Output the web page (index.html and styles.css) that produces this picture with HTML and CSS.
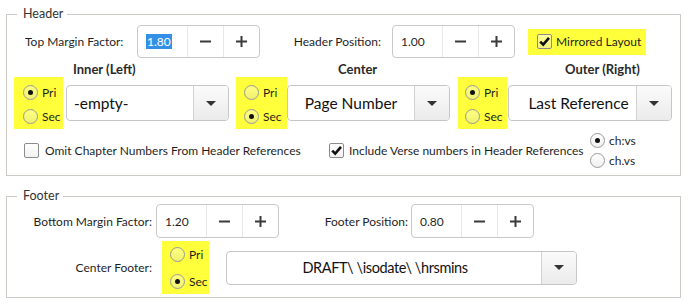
FILE: index.html
```html
<!DOCTYPE html>
<html lang="en">
<head>
  <meta charset="UTF-8" />
  <title>Header and Footer</title>
  <link rel="stylesheet" href="styles.css">
</head>
<body>
  <div class="page">
    <fieldset class="group">
      <legend>Header</legend>

      <div class="row row-spin">
        <label class="label-top">Top Margin Factor:</label>
        <div class="spin">
          <span class="spin-value"><span class="selected">1.80</span></span>
          <span class="spin-btn"><svg width="11" height="11" viewBox="0 0 11 11"><rect x="0" y="4.5" width="11" height="2" fill="#3a3a3a"/></svg></span>
          <span class="spin-btn"><svg width="11" height="11" viewBox="0 0 11 11"><rect x="0" y="4.5" width="11" height="2" fill="#3a3a3a"/><rect x="4.5" y="0" width="2" height="11" fill="#3a3a3a"/></svg></span>
        </div>
        <label class="label-pos">Header Position:</label>
        <div class="spin">
          <span class="spin-value">1.00</span>
          <span class="spin-btn"><svg width="11" height="11" viewBox="0 0 11 11"><rect x="0" y="4.5" width="11" height="2" fill="#3a3a3a"/></svg></span>
          <span class="spin-btn"><svg width="11" height="11" viewBox="0 0 11 11"><rect x="0" y="4.5" width="11" height="2" fill="#3a3a3a"/><rect x="4.5" y="0" width="2" height="11" fill="#3a3a3a"/></svg></span>
        </div>
        <div class="hl mirror">
          <span class="check"><svg width="13" height="13" viewBox="0 0 13 13"><path d="M2.2 6.6 L5.2 9.6 L11 2.8" fill="none" stroke="#111" stroke-width="2.6"/></svg></span>
          Mirrored Layout
        </div>
      </div>

      <div class="col-titles">
        <span>Inner (Left)</span>
        <span>Center</span>
        <span>Outer (Right)</span>
      </div>

      <div class="row row-slots">
        <div class="hl radios slot-1">
          <div class="radio-line"><span class="radio on"></span>Pri</div>
          <div class="radio-line"><span class="radio"></span>Sec</div>
        </div>
        <div class="combo combo-1">
          <span class="combo-text">-empty-</span>
          <span class="combo-btn"><svg width="10" height="5" viewBox="0 0 10 5"><polygon points="0,0 10,0 5,5" fill="#333"/></svg></span>
        </div>
        <div class="hl radios slot-2">
          <div class="radio-line"><span class="radio"></span>Pri</div>
          <div class="radio-line"><span class="radio on"></span>Sec</div>
        </div>
        <div class="combo combo-2">
          <span class="combo-text centered">Page Number</span>
          <span class="combo-btn"><svg width="10" height="5" viewBox="0 0 10 5"><polygon points="0,0 10,0 5,5" fill="#333"/></svg></span>
        </div>
        <div class="hl radios slot-3">
          <div class="radio-line"><span class="radio on"></span>Pri</div>
          <div class="radio-line"><span class="radio"></span>Sec</div>
        </div>
        <div class="combo combo-3">
          <span class="combo-text centered">Last Reference</span>
          <span class="combo-btn"><svg width="10" height="5" viewBox="0 0 10 5"><polygon points="0,0 10,0 5,5" fill="#333"/></svg></span>
        </div>
      </div>

      <div class="row row-options">
        <div class="option opt-omit"><span class="check"></span>Omit Chapter Numbers From Header References</div>
        <div class="option opt-verse">
          <span class="check"><svg width="13" height="13" viewBox="0 0 13 13"><path d="M2.2 6.6 L5.2 9.6 L11 2.8" fill="none" stroke="#111" stroke-width="2.6"/></svg></span>
          Include Verse numbers in Header References
        </div>
        <div class="sep-radios">
          <div class="radio-line"><span class="radio on"></span>ch:vs</div>
          <div class="radio-line"><span class="radio"></span>ch.vs</div>
        </div>
      </div>
    </fieldset>

    <fieldset class="group footer-group">
      <legend>Footer</legend>

      <div class="row row-spin-f">
        <label class="label-f">Bottom Margin Factor:</label>
        <div class="spin">
          <span class="spin-value">1.20</span>
          <span class="spin-btn"><svg width="11" height="11" viewBox="0 0 11 11"><rect x="0" y="4.5" width="11" height="2" fill="#3a3a3a"/></svg></span>
          <span class="spin-btn"><svg width="11" height="11" viewBox="0 0 11 11"><rect x="0" y="4.5" width="11" height="2" fill="#3a3a3a"/><rect x="4.5" y="0" width="2" height="11" fill="#3a3a3a"/></svg></span>
        </div>
        <label class="label-fpos">Footer Position:</label>
        <div class="spin">
          <span class="spin-value">0.80</span>
          <span class="spin-btn"><svg width="11" height="11" viewBox="0 0 11 11"><rect x="0" y="4.5" width="11" height="2" fill="#3a3a3a"/></svg></span>
          <span class="spin-btn"><svg width="11" height="11" viewBox="0 0 11 11"><rect x="0" y="4.5" width="11" height="2" fill="#3a3a3a"/><rect x="4.5" y="0" width="2" height="11" fill="#3a3a3a"/></svg></span>
        </div>
      </div>

      <div class="row row-center-f">
        <label class="label-f">Center Footer:</label>
        <div class="hl radios slot-f">
          <div class="radio-line"><span class="radio"></span>Pri</div>
          <div class="radio-line"><span class="radio on"></span>Sec</div>
        </div>
        <div class="combo combo-f">
          <span class="combo-text centered">DRAFT\ \isodate\ \hrsmins</span>
          <span class="combo-btn"><svg width="10" height="5" viewBox="0 0 10 5"><polygon points="0,0 10,0 5,5" fill="#333"/></svg></span>
        </div>
      </div>
    </fieldset>
  </div>
</body>
</html>
```

FILE: styles.css
```css
body {
  margin: 0;
  background: #ffffff;
  font-family: Lato, "Liberation Sans", sans-serif;
  font-size: 12px;
  color: #1f1f1f;
}

.page {
  padding: 6px 0 0 6px;
}

.group {
  width: 675px;
  box-sizing: border-box;
  margin: 0;
  padding: 0;
  min-width: 0;
  border: 1px solid #cdc9c5;
}

.group legend {
  margin-left: 10px;
  padding: 0 4px 0 6px;
  line-height: 16px;
  font-size: 12.5px;
  color: #333;
}

.footer-group {
  margin-top: 12px;
}

.row {
  display: flex;
  align-items: center;
  white-space: nowrap;
}

/* highlighted (yellow) boxes */
.hl {
  background-color: #ffff3c;
  box-sizing: border-box;
}

/* spin boxes */
.spin {
  display: flex;
  width: 123px;
  height: 33px;
  box-sizing: border-box;
  border: 1px solid #c9c9c9;
  border-radius: 4px;
  background: #fff;
}

.spin-value {
  flex: 1;
  display: flex;
  align-items: center;
  padding-left: 8px;
}

.selected {
  background-color: #3390e6;
  color: #fff;
  padding: 0 1px;
  line-height: 15px;
}

.spin-btn {
  width: 35px;
  display: flex;
  align-items: center;
  justify-content: center;
  border-left: 1px solid #e8e8e8;
}

/* check boxes */
.check {
  width: 15px;
  height: 15px;
  box-sizing: border-box;
  border: 1px solid #8c8c8c;
  border-radius: 2px;
  background: linear-gradient(rgba(255,255,255,0.5), rgba(220,220,220,0.4));
  display: flex;
  align-items: center;
  justify-content: center;
  flex-shrink: 0;
}

/* radio buttons */
.radio-line {
  display: flex;
  align-items: center;
  gap: 4px;
}

.radio {
  width: 15px;
  height: 15px;
  box-sizing: border-box;
  border: 1px solid #9a9a9a;
  border-radius: 50%;
  background: linear-gradient(rgba(255,255,255,0.35), rgba(210,210,210,0.35));
  display: flex;
  align-items: center;
  justify-content: center;
}

.radio.on::after {
  content: "";
  width: 5px;
  height: 5px;
  border-radius: 50%;
  background: #111;
}

/* combo boxes */
.combo {
  display: flex;
  height: 36px;
  box-sizing: border-box;
  border: 1px solid #c6c6c6;
  border-radius: 4px;
  background: #fff;
  overflow: hidden;
}

.combo-text {
  flex: 1;
  display: flex;
  align-items: center;
  padding-left: 7px;
  font-size: 15.5px;
  color: #111;
  white-space: nowrap;
}

.combo-text.centered {
  justify-content: center;
  padding-left: 0;
}

.combo-btn {
  width: 34px;
  display: flex;
  align-items: center;
  justify-content: center;
  border-left: 1px solid #d2d2d2;
  background: linear-gradient(#fbfbfb, #ebebeb);
}

/* header rows */
.row-spin {
  margin-top: 3px;
  height: 33px;
}

.label-top {
  width: 130px;
  box-sizing: border-box;
  padding-left: 18px;
}

.label-pos {
  width: 132px;
  box-sizing: border-box;
  text-align: right;
  padding-right: 11px;
}

.mirror {
  margin-left: 13px;
  width: 118px;
  height: 26px;
  padding-left: 9px;
  display: flex;
  align-items: center;
  gap: 4px;
}

.col-titles {
  display: grid;
  grid-template-columns: 265px 227px auto;
  padding-left: 66px;
  margin-top: 4px;
  height: 15px;
  line-height: 15px;
  font-size: 13px;
  font-weight: bold;
  color: #2a2a2a;
}

.row-slots {
  padding-left: 7px;
  height: 52px;
}

.radios {
  height: 52px;
  padding: 3px 0 1px 8px;
}

.radios .radio-line {
  height: 24px;
}

.slot-1 { width: 49px; padding-left: 9px; }
.combo-1 { width: 163px; margin-left: 3px; }
.slot-2 { width: 51px; margin-left: 7px; }
.combo-2 { width: 163px; }
.slot-3 { width: 49px; margin-left: 8px; padding-left: 7px; }
.combo-3 { width: 164px; margin-left: 1px; }

.combo-3 .combo-text {
  padding-left: 12px;
}

.combo-f .combo-text {
  font-size: 14.5px;
  letter-spacing: -0.4px;
  padding-left: 2px;
}

.row-options {
  margin-top: 1px;
  margin-bottom: 5px;
  height: 40px;
  padding-left: 17px;
}

.option {
  display: flex;
  align-items: center;
}

.opt-omit {
  width: 305px;
  gap: 6px;
}

.opt-verse {
  width: 261px;
  gap: 5px;
}

.sep-radios .radio-line {
  height: 20px;
}

/* footer rows */
.row-spin-f {
  height: 34px;
}

.row-spin-f .spin {
  height: 34px;
}

.label-f {
  width: 149px;
  box-sizing: border-box;
  text-align: right;
  padding-right: 4px;
}

.label-fpos {
  width: 132px;
  box-sizing: border-box;
  text-align: right;
  padding-right: 3px;
}

.row-center-f {
  margin-top: 3px;
  margin-bottom: 3px;
  height: 53px;
}

.slot-f {
  width: 47px;
  height: 53px;
  margin-left: 6px;
  padding: 0 0 0 8px;
}

.slot-f .radio-line {
  height: 27px;
}

.combo-f {
  width: 351px;
  height: 34px;
  margin-left: 17px;
}
```
